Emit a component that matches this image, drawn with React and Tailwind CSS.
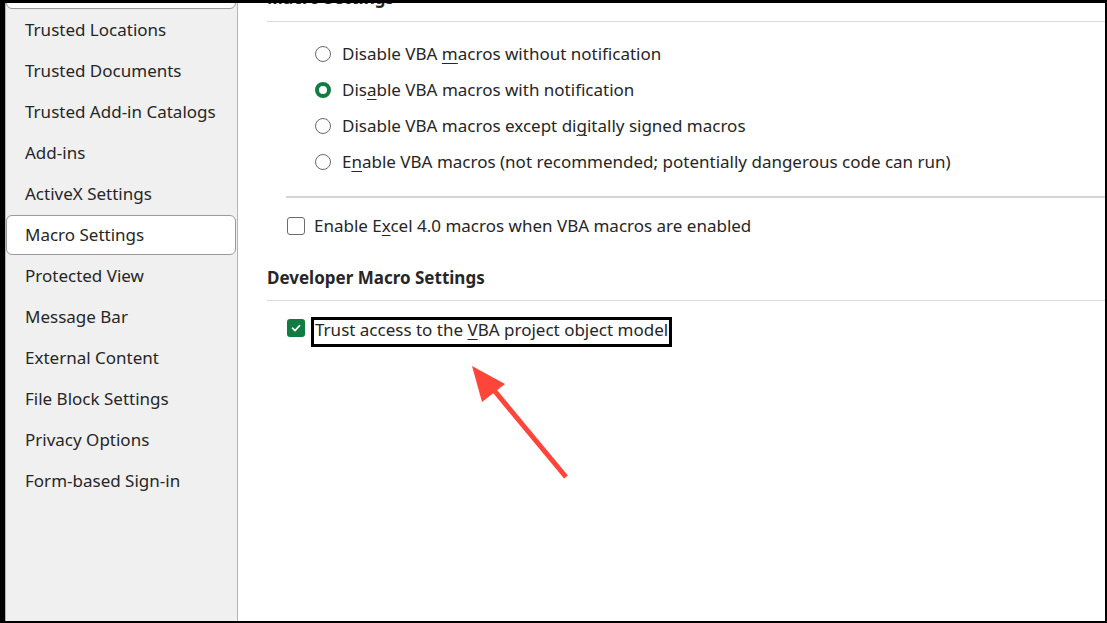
import React from "react";

const navItems = [
  "Trusted Publishers",
  "Trusted Locations",
  "Trusted Documents",
  "Trusted Add-in Catalogs",
  "Add-ins",
  "ActiveX Settings",
  "Macro Settings",
  "Protected View",
  "Message Bar",
  "External Content",
  "File Block Settings",
  "Privacy Options",
  "Form-based Sign-in",
];

const font = { fontFamily: '"Noto Sans", "Open Sans", sans-serif' };

// label text with an underlined access-key letter
const Mnemonic = ({ before, letter, after }) => (
  <span>
    {before}
    <u className="underline-offset-[3px] decoration-1">{letter}</u>
    {after}
  </span>
);

const Radio = ({ checked, children }) => (
  <div className="h-[36px] flex items-center">
    {checked ? (
      <span className="w-[16px] h-[16px] rounded-full border-[4px] border-[#107c41] bg-white" />
    ) : (
      <span className="w-[16px] h-[16px] rounded-full border border-[#6b6b6b] bg-white" />
    )}
    <span className="ml-[11px]">{children}</span>
  </div>
);

const Sidebar = () => (
  <div className="w-[233px] shrink-0 bg-[#f0f0f0] border-l border-[#b5b5b5] border-r border-[#8a8a8a] overflow-hidden">
    <div className="-mt-[34px] flex flex-col gap-[1px]">
      {navItems.map((item, i) => {
        const boxed = i === 0 || item === "Macro Settings";
        return (
          <div
            key={item}
            className={`h-[40px] flex items-center pl-[18px] mr-[1px] rounded-[6px] border ${
              boxed ? "bg-white border-[#9a9a9a]" : "border-transparent"
            }`}
          >
            {item}
          </div>
        );
      })}
    </div>
  </div>
);

export default function App() {
  return (
    <div
      className="w-[1107px] h-[623px] bg-black pt-[3px] pl-[5px] pr-[2px] pb-[2px] text-[#262626] text-[17px]"
      style={font}
    >
      <div className="relative flex h-full overflow-hidden">
        <Sidebar />

        <div className="flex-1 bg-white overflow-hidden">
          <div className="-mt-[17px] ml-[29px] pb-[11px] border-b border-[#d9d9d9] font-bold leading-[24px]">
            Macro Settings
          </div>

          <div className="mt-[14px] ml-[77px]">
            <Radio>
              <Mnemonic before="Disable VBA " letter="m" after="acros without notification" />
            </Radio>
            <Radio checked>
              <Mnemonic before="Dis" letter="a" after="ble VBA macros with notification" />
            </Radio>
            <Radio>
              <Mnemonic before="Disable VBA macros except di" letter="g" after="itally signed macros" />
            </Radio>
            <Radio>
              <Mnemonic
                before="E"
                letter="n"
                after="able VBA macros (not recommended; potentially dangerous code can run)"
              />
            </Radio>
          </div>

          <div className="mt-[16px] ml-[48px] h-[2px] bg-[#d4d4d4]" />

          <div className="mt-[10px] ml-[49px] h-[36px] flex items-center">
            <span className="w-[18px] h-[18px] rounded-[3px] border border-[#6b6b6b] bg-white" />
            <span className="ml-[9px]">
              <Mnemonic before="Enable E" letter="x" after="cel 4.0 macros when VBA macros are enabled" />
            </span>
          </div>

          <div className="mt-[22px] ml-[29px] pb-[10px] border-b border-[#d9d9d9] font-bold leading-[24px]">
            Developer Macro Settings
          </div>

          <div className="mt-[9px] ml-[49px] h-[36px] flex items-center">
            <span className="w-[18px] h-[18px] rounded-[3px] bg-[#107c41] flex items-center justify-center">
              <svg width="12" height="12" viewBox="0 0 12 12" fill="none">
                <path d="M2.5 6.2 L5 8.6 L9.6 3.6" stroke="white" strokeWidth="1.6" strokeLinecap="round" strokeLinejoin="round" />
              </svg>
            </span>
            <span className="ml-[6px] mt-[7px] h-[30px] border-[3px] border-black px-[1px] pb-[3px] flex items-center">
              <Mnemonic before="Trust access to the " letter="V" after="BA project object model" />
            </span>
          </div>
        </div>

        {/* red call-out arrow */}
        <svg
          className="absolute left-[460px] top-[357px] pointer-events-none"
          width="120"
          height="130"
          viewBox="0 0 120 130"
        >
          <line x1="101" y1="117" x2="28" y2="29" stroke="#ff4539" strokeWidth="5" />
          <polygon points="7,6 17,42 40,24" fill="#ff4539" />
        </svg>
      </div>
    </div>
  );
}
